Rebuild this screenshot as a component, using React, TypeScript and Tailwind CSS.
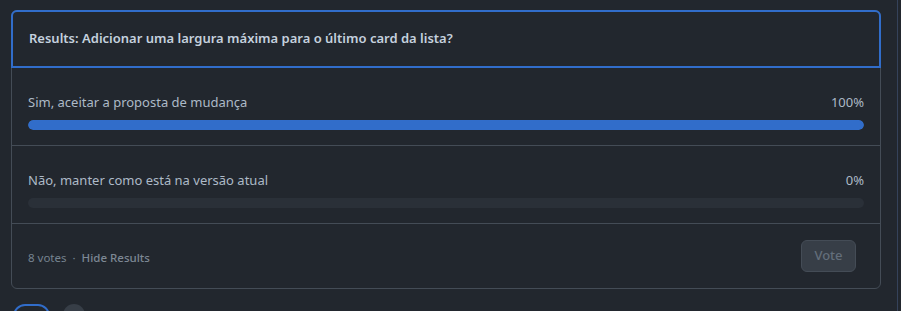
import React from "react";

type Option = { label: string; percent: number };

const options: Option[] = [
  { label: "Sim, aceitar a proposta de mudança", percent: 100 },
  { label: "Não, manter como está na versão atual", percent: 0 },
];

const font = { fontFamily: '"Segoe UI", "Noto Sans", "Open Sans", sans-serif' };

export default function App() {
  return (
    <div className="flex h-[311px] w-full overflow-hidden bg-[#22272e]" style={font}>
      <div className="w-[897px] shrink-0 pt-[10px] pl-[11px]">
        <div className="w-[870px] rounded-md border border-[#444c56]">
          <div className="-mx-px -mt-px flex h-[58px] items-center rounded-t-md border-2 border-[#316dca] px-4">
            <h3 className="text-[13px] font-semibold text-[#c5d1de]">
              Results: Adicionar uma largura máxima para o último card da lista?
            </h3>
          </div>
          {options.map((opt, idx) => (
            <div key={idx} className="border-b border-[#444c56] px-4 pt-[25px] pb-[15px]">
              <div className="flex h-5 items-center justify-between text-[13px] text-[#adbac7]">
                <span>{opt.label}</span>
                <span>{opt.percent}%</span>
              </div>
              <div className="mt-[7px] h-[10px] w-full overflow-hidden rounded-full bg-[#2a3038]">
                <div className="h-full rounded-full bg-[#316dca]" style={{ width: `${opt.percent}%` }} />
              </div>
            </div>
          ))}
          <div className="flex items-center justify-between py-4 pr-6 pl-4">
            <div className="flex items-center pt-[3px] text-[11.5px] text-[#768390]">
              <span>8 votes</span>
              <span className="mx-[6px]">·</span>
              <span className="font-medium text-[#7d8894]">Hide Results</span>
            </div>
            <button
              disabled
              className="h-8 w-[55px] rounded-md border border-[#444c56] bg-[#373e47] text-[13px] font-medium text-[#636e7b]"
            >
              Vote
            </button>
          </div>
        </div>
        <div className="mt-[15px] flex items-center gap-[13px] pl-[2px]">
          <div className="h-6 w-[37px] rounded-full border-2 border-[#316dca] bg-[#22272e]" />
          <div className="h-6 w-[22px] rounded-full bg-[#373e47]" />
        </div>
      </div>
      <div className="w-px shrink-0 bg-[#35425a]" />
    </div>
  );
}
